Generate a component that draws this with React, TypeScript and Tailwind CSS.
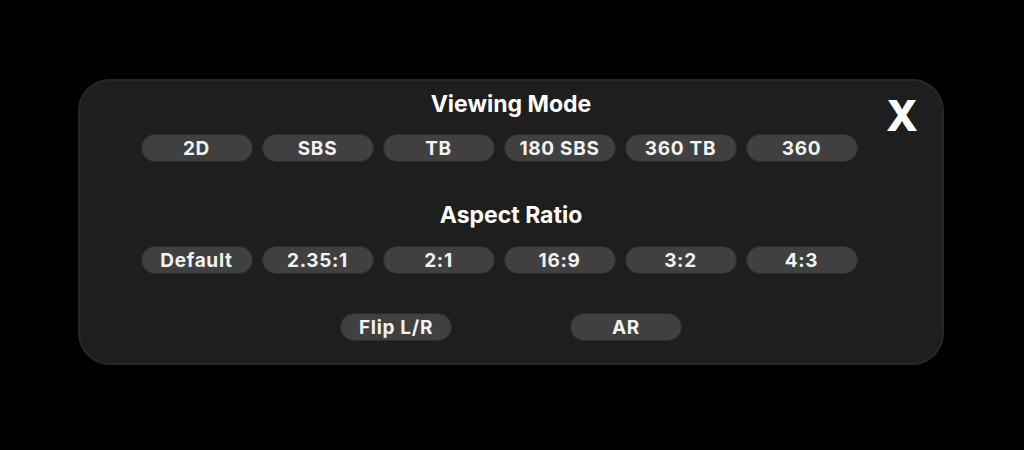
import React from "react";

const row1 = ["2D", "SBS", "TB", "180 SBS", "360 TB", "360"];
const row2 = ["Default", "2.35:1", "2:1", "16:9", "3:2", "4:3"];

function Btn({ label }: { label: string }) {
  return (
    <div className="w-[112px] h-[28px] rounded-full bg-[#404040] border border-[#2c2c2c] flex items-center justify-center text-[19px] leading-none font-bold tracking-[0.7px] text-[#f2f2f2]">
      {label}
    </div>
  );
}

export default function App() {
  return (
    <div
      className="w-[1024px] h-[450px] bg-black pt-[79px] pl-[78px]"
      style={{ fontFamily: "Inter, 'Noto Sans', sans-serif" }}
    >
      <div className="relative w-[866px] h-[286px] rounded-[32px] bg-[#1e1e1e] border-2 border-[#272727] flex flex-col items-center pt-[9px]">
        <div className="text-[23px] leading-[28px] font-bold text-white">Viewing Mode</div>
        <div className="mt-[16px] flex gap-[9px] pr-[24px]">
          {row1.map((l) => (
            <Btn key={l} label={l} />
          ))}
        </div>
        <div className="mt-[39px] text-[23px] leading-[28px] font-bold text-white">Aspect Ratio</div>
        <div className="mt-[17px] flex gap-[9px] pr-[24px]">
          {row2.map((l) => (
            <Btn key={l} label={l} />
          ))}
        </div>
        <div className="mt-[39px] flex gap-[118px]">
          <Btn label="Flip L/R" />
          <Btn label="AR" />
        </div>
        <div className="absolute left-[806px] top-[14px] text-[42px] leading-none font-extrabold text-white">X</div>
      </div>
    </div>
  );
}
